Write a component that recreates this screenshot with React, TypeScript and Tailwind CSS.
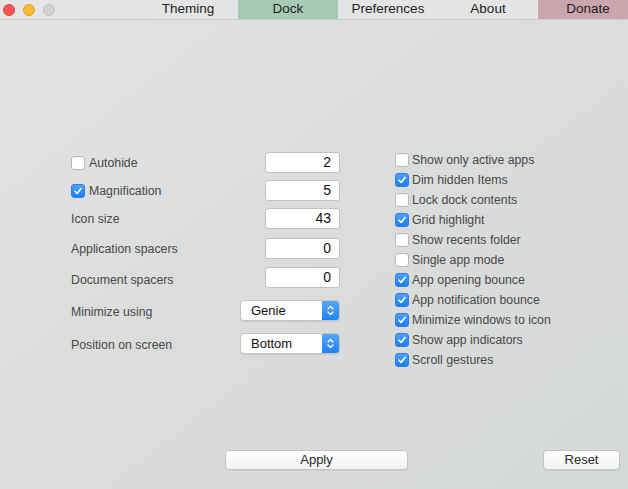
import React from "react";

const font = { fontFamily: '"Liberation Sans", Arial, sans-serif' };

function Check({ checked }: { checked: boolean }) {
  if (checked) {
    return (
      <span className="w-[14px] h-[14px] rounded-[3px] bg-gradient-to-b from-[#4aa3fb] to-[#1a7ef5] flex items-center justify-center shrink-0 border border-[#2a80ea]">
        <svg width="10" height="10" viewBox="0 0 10 10">
          <path d="M2 5.2 L4.1 7.4 L8 2.4" fill="none" stroke="white" strokeWidth="1.6" strokeLinecap="round" strokeLinejoin="round" />
        </svg>
      </span>
    );
  }
  return <span className="w-[14px] h-[14px] rounded-[3px] bg-white border border-[#b8b8b8] shrink-0 shadow-[inset_0_1px_0_rgba(0,0,0,0.03)]" />;
}

function NumInput({ v }: { v: string }) {
  return (
    <div className="w-[75px] h-[21px] bg-white border border-[#c2c2c2] rounded-[3px] flex items-center justify-end pr-[8px] text-[14px] text-[#111]">
      {v}
    </div>
  );
}

function Select({ v }: { v: string }) {
  return (
    <div className="w-[100px] h-[21px] bg-white border border-[#c4c4c4] rounded-[4px] flex items-center overflow-hidden shadow-[0_1px_1px_rgba(0,0,0,0.08)]">
      <span className="flex-1 pl-[10px] text-[13px] text-[#111]">{v}</span>
      <span className="w-[17px] h-full bg-gradient-to-b from-[#55a8fc] to-[#1f80f5] flex items-center justify-center">
        <svg width="9" height="13" viewBox="0 0 9 13">
          <path d="M2 5 L4.5 2.5 L7 5 M2 8 L4.5 10.5 L7 8" fill="none" stroke="white" strokeWidth="1.3" strokeLinecap="round" strokeLinejoin="round" />
        </svg>
      </span>
    </div>
  );
}

export default function App() {
  const tabs = [
    { name: "Theming", bg: "" },
    { name: "Dock", bg: "bg-[#a6cbb5]" },
    { name: "Preferences", bg: "" },
    { name: "About", bg: "" },
    { name: "Donate", bg: "bg-[#c9a6ae]" },
  ];
  const right: [string, boolean][] = [
    ["Show only active apps", false],
    ["Dim hidden Items", true],
    ["Lock dock contents", false],
    ["Grid highlight", true],
    ["Show recents folder", false],
    ["Single app mode", false],
    ["App opening bounce", true],
    ["App notification bounce", true],
    ["Minimize windows to icon", true],
    ["Show app indicators", true],
    ["Scroll gestures", true],
  ];
  const label = "text-[12.3px] text-[#484848]";
  return (
    <div style={font} className="w-[628px] h-[489px] overflow-hidden flex flex-col bg-gradient-to-br from-[#e3e3e3] via-[#dbdcdc] to-[#d6d9d9]">
      {/* title bar */}
      <div className="h-[20px] shrink-0 flex bg-[#e5e5e5] border-b border-[#cbcbcb]">
        <div className="w-[138px] shrink-0 flex items-center pl-[3px] gap-[8px]">
          <span className="w-[12px] h-[12px] rounded-full bg-[#fc5753] border border-[#df3e3b]" />
          <span className="w-[12px] h-[12px] rounded-full bg-[#fdbc2e] border border-[#dea123]" />
          <span className="w-[12px] h-[12px] rounded-full bg-[#d2d2d2] border border-[#c2c2c2]" />
        </div>
        {tabs.map((t) => (
          <div key={t.name} className={`w-[100px] shrink-0 flex items-center justify-center text-[13.5px] text-[#1e1e1e] ${t.bg}`}>
            {t.name}
          </div>
        ))}
      </div>

      {/* content */}
      <div className="flex pl-[71px]">
        <div className="w-[269px] flex flex-col pt-[132px]">
          <div className="h-[21px] flex items-center justify-between">
            <div className="flex items-center gap-[4px] pt-[1px]">
              <Check checked={false} />
              <span className={label}>Autohide</span>
            </div>
            <NumInput v="2" />
          </div>
          <div className="h-[21px] mt-[7px] flex items-center justify-between">
            <div className="flex items-center gap-[4px] pt-[1px]">
              <Check checked={true} />
              <span className={label}>Magnification</span>
            </div>
            <NumInput v="5" />
          </div>
          <div className="h-[21px] mt-[7px] flex items-center justify-between">
            <span className={`${label} pt-[2px]`}>Icon size</span>
            <NumInput v="43" />
          </div>
          <div className="h-[21px] mt-[9px] flex items-center justify-between">
            <span className={`${label} pt-[2px]`}>Application spacers</span>
            <NumInput v="0" />
          </div>
          <div className="h-[21px] mt-[8px] flex items-center justify-between">
            <span className={`${label} pt-[6px]`}>Document spacers</span>
            <NumInput v="0" />
          </div>
          <div className="h-[21px] mt-[12px] flex items-center justify-between">
            <span className={`${label} pt-[3px]`}>Minimize using</span>
            <Select v="Genie" />
          </div>
          <div className="h-[21px] mt-[12px] flex items-center justify-between">
            <span className={`${label} pt-[4px]`}>Position on screen</span>
            <Select v="Bottom" />
          </div>
        </div>

        <div className="ml-[55px] flex flex-col pt-[130px]">
          {right.map(([t, c]) => (
            <div key={t} className="h-[20px] flex items-center gap-[3px]">
              <Check checked={c} />
              <span className={label}>{t}</span>
            </div>
          ))}
        </div>
      </div>

      {/* footer */}
      <div className="mt-auto flex pl-[225px] pb-[19px]">
        <div className="w-[183px] h-[20px] bg-gradient-to-b from-white to-[#f3f3f3] border border-[#c4c4c4] rounded-[4px] flex items-center justify-center text-[13px] text-[#2a2a2a] shadow-[0_1px_0_rgba(0,0,0,0.05)]">
          Apply
        </div>
        <div className="ml-[135px] w-[77px] h-[20px] bg-gradient-to-b from-white to-[#f3f3f3] border border-[#c4c4c4] rounded-[4px] flex items-center justify-center text-[13px] text-[#2a2a2a] shadow-[0_1px_0_rgba(0,0,0,0.05)]">
          Reset
        </div>
      </div>
    </div>
  );
}
